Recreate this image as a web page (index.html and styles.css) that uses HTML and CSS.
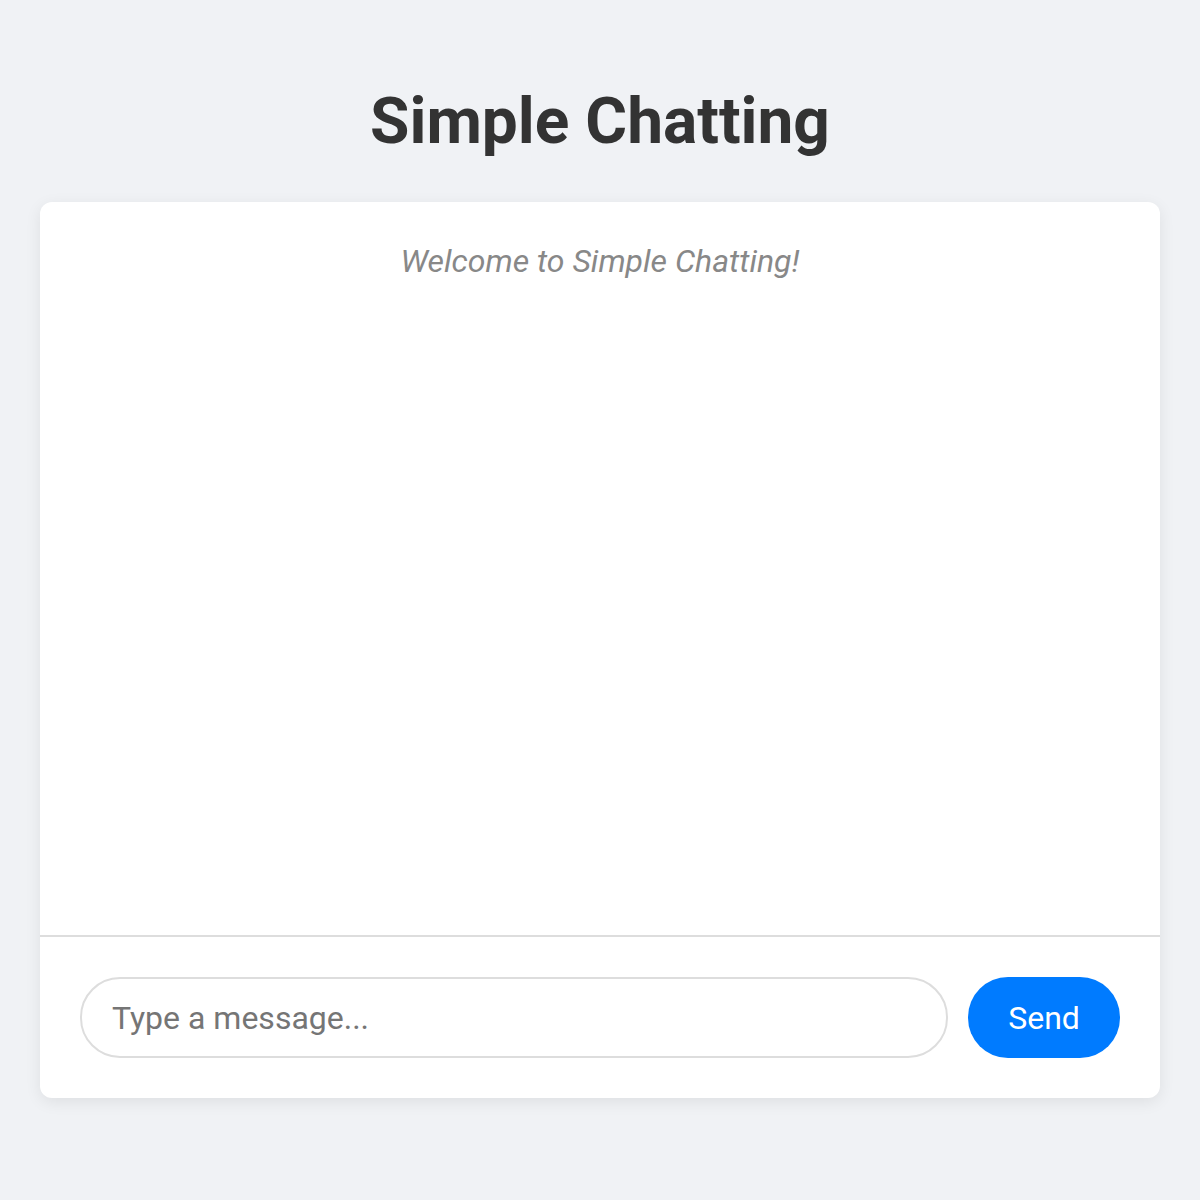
FILE: index.html
```html
<!DOCTYPE html>
<html lang="en">
<head>
<meta charset="UTF-8">
<meta name="viewport" content="width=device-width, initial-scale=1.0">
<title>Simple Chatting</title>
<link rel="stylesheet" href="styles.css">
</head>
<body>

<div class="page">
    <h1>Simple Chatting</h1>

    <div class="chatBox">
        <div id="messages" class="messages">
            <p class="welcome">Welcome to Simple Chatting!</p>
        </div>
        <div class="inputArea">
            <input type="text" id="messageInput" class="messageInput" placeholder="Type a message...">
            <button id="sendButton" class="sendButton">Send</button>
        </div>
    </div>
</div>

</body>
</html>
```

FILE: styles.css
```css
body {
    margin: 0;
    background-color: #f0f2f5;
    font-family: Roboto, "Liberation Sans", sans-serif;
    color: #333333;
}

.page {
    padding: 84px 40px 40px;
}

h1 {
    margin: 0 0 43px;
    font-size: 64px;
    line-height: 75px;
    font-weight: 700;
    text-align: center;
    color: #333333;
}

.chatBox {
    height: 896px;
    background-color: #ffffff;
    border-radius: 12px;
    box-shadow: 0 4px 16px rgba(0, 0, 0, 0.08);
    display: flex;
    flex-direction: column;
    overflow: hidden;
}

.messages {
    flex: 1;
    padding: 40px;
    border-bottom: 2px solid #dddddd;
    overflow-y: auto;
}

.welcome {
    margin: 0;
    font-size: 32px;
    line-height: 38px;
    font-style: italic;
    color: #888888;
    text-align: center;
}

.inputArea {
    display: flex;
    gap: 20px;
    padding: 40px;
}

.messageInput {
    flex: 1;
    height: 81px;
    box-sizing: border-box;
    padding: 0 30px;
    border: 2px solid #dddddd;
    border-radius: 40px;
    font-family: Roboto, "Liberation Sans", sans-serif;
    font-size: 32px;
    color: #333333;
    outline: none;
}

.messageInput::placeholder {
    color: #757575;
}

.sendButton {
    width: 152px;
    height: 81px;
    border: none;
    border-radius: 40px;
    background-color: #007bff;
    color: #ffffff;
    font-family: Roboto, "Liberation Sans", sans-serif;
    font-size: 32px;
    cursor: pointer;
}
```
